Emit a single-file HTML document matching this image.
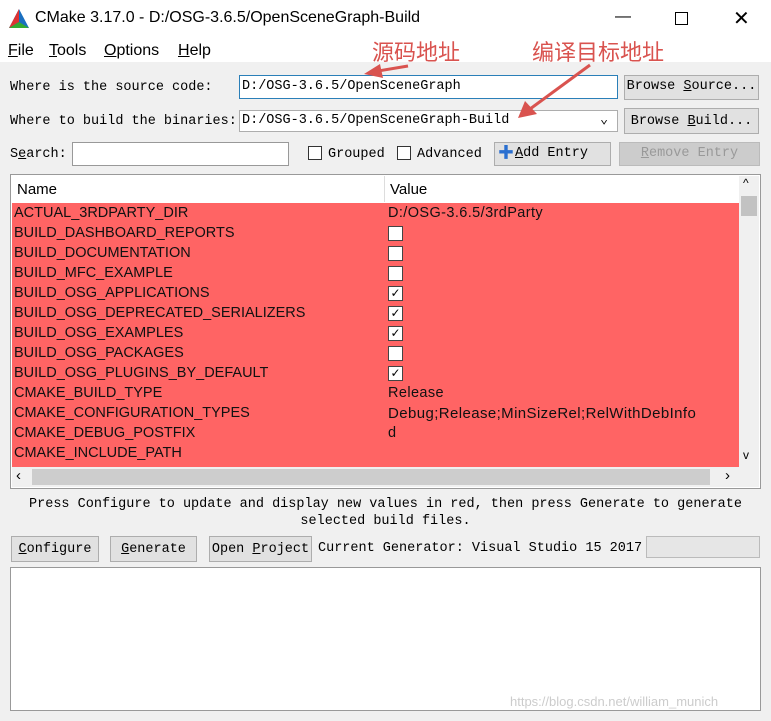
<!DOCTYPE html><html><head><meta charset="utf-8"><style>
body{margin:0;width:771px;height:721px;background:#f0f0f0;position:relative;overflow:hidden;font-family:"Liberation Sans",sans-serif;font-size:15px;color:#000}
div,span{position:absolute;box-sizing:border-box}
.m{font-family:"Liberation Mono","Noto Sans CJK SC",monospace;font-size:13.5px}
.btn{background:#e1e1e1;border:1px solid #adadad;text-align:center;line-height:22px}
.cb{width:14px;height:14px;border:1px solid #333;background:#fff}
.row{left:14px;font-size:14.5px;color:#111}
.v{left:388px;font-size:14.5px;color:#111;letter-spacing:0.4px}
.ck{left:388px;width:15px;height:15px;border:1px solid #444;background:#fff;font-size:12px;line-height:13px;text-align:center}
.mn{top:42px;font-size:16px}
</style></head><body>
<div style="left:0;top:0;width:771px;height:62px;background:#fff"></div>
<svg style="position:absolute;left:8px;top:8px" width="22" height="22"><polygon points="11,1 21,20 1,20" fill="#1a6fc0"/><polygon points="11,1 11,14 1,20" fill="#d33"/><polygon points="11,14 21,20 1,20" fill="#3a3"/></svg>
<span style="left:35px;top:9px;font-size:16px">CMake 3.17.0 - D:/OSG-3.6.5/OpenSceneGraph-Build</span>
<span style="left:615px;top:8px;font-size:16px">—</span>
<div style="left:675px;top:12px;width:13px;height:13px;border:1px solid #000"></div>
<span style="left:733px;top:6px;font-size:20px">✕</span>
<span class="mn" style="left:8px"><u>F</u>ile</span>
<span class="mn" style="left:49px"><u>T</u>ools</span>
<span class="mn" style="left:104px"><u>O</u>ptions</span>
<span class="mn" style="left:178px"><u>H</u>elp</span>
<span style="left:372px;top:35px;font-size:22px;color:#d9534f;font-family:'Noto Sans CJK SC',sans-serif">源码地址</span>
<span style="left:532px;top:35px;font-size:22px;color:#d9534f;font-family:'Noto Sans CJK SC',sans-serif">编译目标地址</span>
<span class="m" style="left:10px;top:80px">Where is the source code:</span>
<div class="m" style="left:239px;top:75px;width:379px;height:24px;background:#fff;border:1px solid #2a7fb8;padding:3px 2px">D:/OSG-3.6.5/OpenSceneGraph</div>
<div class="btn m" style="left:624px;top:75px;width:135px;height:25px">Browse <u>S</u>ource...</div>
<span class="m" style="left:10px;top:114px">Where to build the binaries:</span>
<div class="m" style="left:239px;top:110px;width:379px;height:22px;background:#fff;border:1px solid #adadad;padding:2px 2px">D:/OSG-3.6.5/OpenSceneGraph-Build<span style="left:360px;top:0">⌄</span></div>
<div class="btn m" style="left:624px;top:108px;width:135px;height:26px;line-height:25px">Browse <u>B</u>uild...</div>
<svg style="position:absolute;left:0;top:0" width="771" height="140">
<path d="M408 66 L378 71" stroke="#d9534f" stroke-width="3"/><polygon points="364,74 380,64 383,78" fill="#d9534f"/>
<path d="M590 65 L530 109" stroke="#d9534f" stroke-width="3"/><polygon points="518,118 525,101 537,114" fill="#d9534f"/>
</svg>
<span class="m" style="left:10px;top:147px">S<u>e</u>arch:</span>
<div style="left:72px;top:142px;width:217px;height:24px;background:#fff;border:1px solid #999"></div>
<div class="cb" style="left:308px;top:146px"></div><span class="m" style="left:328px;top:147px">Grouped</span>
<div class="cb" style="left:397px;top:146px"></div><span class="m" style="left:417px;top:147px">Advanced</span>
<div class="btn m" style="left:494px;top:142px;width:117px;height:24px;text-align:left;padding-left:20px"><u>A</u>dd Entry<span style="left:3px;top:0;color:#2a6fd0;font-weight:bold;font-size:16px">✚</span></div>
<div class="btn m" style="left:619px;top:142px;width:141px;height:24px;color:#999;background:#ccc;border-color:#bbb"><u>R</u>emove Entry</div>
<div style="left:10px;top:174px;width:751px;height:315px;background:#fff;border:1px solid #999"></div>
<span style="left:17px;top:181px">Name</span>
<div style="left:384px;top:176px;width:1px;height:26px;background:#ddd"></div>
<span style="left:390px;top:181px">Value</span>
<div style="left:12px;top:203px;width:727px;height:264px;background:#ff6464"></div>
<div style="left:739px;top:176px;width:20px;height:291px;background:#f0f0f0"></div>
<div style="left:741px;top:196px;width:16px;height:20px;background:#c2c2c2"></div>
<span style="left:743px;top:176px;font-size:12px">^</span><span style="left:743px;top:448px;font-size:12px">v</span>
<div style="left:12px;top:467px;width:747px;height:20px;background:#f0f0f0"></div>
<div style="left:32px;top:469px;width:678px;height:16px;background:#cdcdcd"></div>
<span style="left:16px;top:467px">‹</span><span style="left:725px;top:467px">›</span>
<span class="row" style="top:205px">ACTUAL_3RDPARTY_DIR</span><span class="v" style="top:205px">D:/OSG-3.6.5/3rdParty</span>
<span class="row" style="top:225px">BUILD_DASHBOARD_REPORTS</span><div class="ck" style="top:226px"></div>
<span class="row" style="top:245px">BUILD_DOCUMENTATION</span><div class="ck" style="top:246px"></div>
<span class="row" style="top:265px">BUILD_MFC_EXAMPLE</span><div class="ck" style="top:266px"></div>
<span class="row" style="top:285px">BUILD_OSG_APPLICATIONS</span><div class="ck" style="top:286px">✓</div>
<span class="row" style="top:305px">BUILD_OSG_DEPRECATED_SERIALIZERS</span><div class="ck" style="top:306px">✓</div>
<span class="row" style="top:325px">BUILD_OSG_EXAMPLES</span><div class="ck" style="top:326px">✓</div>
<span class="row" style="top:345px">BUILD_OSG_PACKAGES</span><div class="ck" style="top:346px"></div>
<span class="row" style="top:365px">BUILD_OSG_PLUGINS_BY_DEFAULT</span><div class="ck" style="top:366px">✓</div>
<span class="row" style="top:385px">CMAKE_BUILD_TYPE</span><span class="v" style="top:385px">Release</span>
<span class="row" style="top:405px">CMAKE_CONFIGURATION_TYPES</span><span class="v" style="top:405px;font-size:15px">Debug;Release;MinSizeRel;RelWithDebInfo</span>
<span class="row" style="top:425px">CMAKE_DEBUG_POSTFIX</span><span class="v" style="top:425px">d</span>
<span class="row" style="top:445px">CMAKE_INCLUDE_PATH</span>
<div class="m" style="left:10px;top:496px;width:751px;text-align:center;line-height:17px">Press Configure to update and display new values in red, then press Generate to generate<br>selected build files.</div>
<div class="btn m" style="left:11px;top:536px;width:88px;height:26px;line-height:25px"><u>C</u>onfigure</div>
<div class="btn m" style="left:110px;top:536px;width:87px;height:26px;line-height:25px"><u>G</u>enerate</div>
<div class="btn m" style="left:209px;top:536px;width:103px;height:26px;line-height:25px">Open <u>P</u>roject</div>
<span class="m" style="left:318px;top:541px">Current Generator: Visual Studio 15 2017</span>
<div style="left:646px;top:536px;width:114px;height:22px;background:#e6e6e6;border:1px solid #bbb"></div>
<div style="left:10px;top:567px;width:751px;height:144px;background:#fff;border:1px solid #999"></div>
<span style="left:510px;top:694px;font-size:13px;color:#ccc">https://blog.csdn.net/william_munich</span>
</body></html>
